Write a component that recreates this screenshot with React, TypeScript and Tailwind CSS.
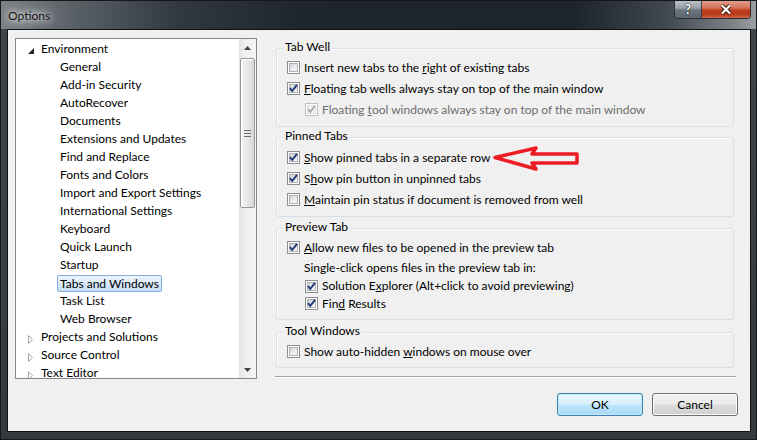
// Options 대화상자 (VS 2012, Win7 Aero) — Tabs and Windows 페이지
import type { ReactNode } from "react"

// ─── 트리 항목 ────────────────────────────────────────────────────────────────
const ENV_ITEMS = [
  "General",
  "Add-in Security",
  "AutoRecover",
  "Documents",
  "Extensions and Updates",
  "Find and Replace",
  "Fonts and Colors",
  "Import and Export Settings",
  "International Settings",
  "Keyboard",
  "Quick Launch",
  "Startup",
  "Tabs and Windows",
  "Task List",
  "Web Browser",
]
const ROOTS = ["Projects and Solutions", "Source Control", "Text Editor"]
const SELECTED = "Tabs and Windows"

// ─── 체크박스 (Win7 스타일) ───────────────────────────────────────────────────
function Check({ checked = false, disabled = false }: { checked?: boolean; disabled?: boolean }) {
  return (
    <span
      className={`relative w-[13px] h-[13px] shrink-0 border p-px bg-white ${
        disabled ? "border-[#c0c0c0]" : "border-[#8e8f8f]"
      }`}
    >
      <span
        className={`block w-full h-full border ${
          disabled
            ? "border-[#e2e2e2] bg-[#f4f4f4]"
            : "border-[#aeb2b7] bg-[linear-gradient(135deg,#cfd2d6_0%,#e9ebed_55%,#f8f8f8_100%)]"
        }`}
      />
      {checked && (
        <svg className="absolute left-0 top-0" width="11" height="11" viewBox="1 1 11 11">
          <path
            d="M3 6 L5.2 9 L10 2.8"
            fill="none"
            stroke={disabled ? "#a9a9b2" : "#21397a"}
            strokeWidth="2"
            strokeLinejoin="round"
          />
        </svg>
      )}
    </span>
  )
}

// ─── 그룹 박스 ────────────────────────────────────────────────────────────────
function Group({ title, className, children }: { title: string; className: string; children: ReactNode }) {
  return (
    <div
      className={`ml-px w-[458px] border border-[#d5dfe5] rounded-[3px] shadow-[inset_1px_1px_0_#fff] ${className}`}
    >
      <div className="-mt-[10px] ml-[6px] w-fit h-[16px] px-[2px] leading-[16px] bg-[#f0f0f0]">{title}</div>
      {children}
    </div>
  )
}

function Opt({
  h = 21,
  nested = false,
  checked,
  disabled,
  children,
}: {
  h?: number
  nested?: boolean
  checked?: boolean
  disabled?: boolean
  children: ReactNode
}) {
  return (
    <div
      className={`flex items-center ${nested ? "pl-[28px]" : "pl-[10px]"} ${
        disabled ? "text-[#6d6d6d]" : ""
      }`}
      style={{ height: h }}
    >
      <Check checked={checked} disabled={disabled} />
      <span className="ml-[4px] whitespace-nowrap">{children}</span>
    </div>
  )
}

// ─── 스크롤바 ────────────────────────────────────────────────────────────────
function ScrollBar() {
  return (
    <div className="w-[17px] h-full flex flex-col bg-[linear-gradient(90deg,#e4e4e4_0%,#efefef_35%,#f6f6f6_100%)]">
      <div className="h-[17px] flex items-center justify-center">
        <svg width="7" height="4" viewBox="0 0 7 4">
          <polygon points="0,4 3.5,0 7,4" fill="#404040" />
        </svg>
      </div>
      <div className="mt-[2px] mx-px h-[150px] rounded-[2px] border border-[#979797] bg-[linear-gradient(90deg,#f5f5f5_0%,#e9e9e9_45%,#d8d8d8_100%)] shadow-[inset_1px_1px_0_#fff] flex items-center justify-center">
        <svg width="7" height="7" viewBox="0 0 7 7">
          <path d="M0 0.5h7M0 3.5h7M0 6.5h7" stroke="#6f6f6f" strokeWidth="1" />
        </svg>
      </div>
      <div className="flex-1" />
      <div className="h-[17px] flex items-center justify-center">
        <svg width="7" height="4" viewBox="0 0 7 4">
          <polygon points="0,0 3.5,4 7,0" fill="#404040" />
        </svg>
      </div>
    </div>
  )
}

// ─── 트리 ────────────────────────────────────────────────────────────────────
function Tree() {
  return (
    <div className="w-[242px] h-full border border-[#828790] bg-white flex overflow-hidden">
      <div className="flex-1 pt-px overflow-hidden">
        <div className="h-[18px] flex items-center pl-[12px]">
          <svg className="mt-[3px]" width="6" height="6" viewBox="0 0 6 6">
            <polygon points="6,0 6,6 0,6" fill="#262626" />
          </svg>
          <span className="ml-[7px]">Environment</span>
        </div>
        {ENV_ITEMS.map((it) =>
          it === SELECTED ? (
            <div key={it} className="h-[18px] flex items-center pl-[41px]">
              <span className="h-[17px] px-[2px] leading-[15px] whitespace-nowrap rounded-[2px] border border-[#84acdd] bg-[linear-gradient(180deg,#eef5fd_0%,#d9e8f9_50%,#c9def6_100%)]">
                {it}
              </span>
            </div>
          ) : (
            <div key={it} className="h-[18px] flex items-center pl-[44px] whitespace-nowrap">
              {it}
            </div>
          )
        )}
        {ROOTS.map((it) => (
          <div key={it} className="h-[18px] flex items-center pl-[12px] whitespace-nowrap">
            <svg className="mt-[4px]" width="5" height="9" viewBox="0 0 5 9">
              <polygon points="0.5,0.5 4.5,4.5 0.5,8.5" fill="#fff" stroke="#a6a6a6" />
            </svg>
            <span className="ml-[8px]">{it}</span>
          </div>
        ))}
      </div>
      <ScrollBar />
    </div>
  )
}

export default function App() {
  return (
    <div className="relative w-[757px] h-[440px] overflow-hidden border border-[#14181b] bg-[linear-gradient(180deg,#3f454b_0%,#33393e_100%)] font-['Lato',sans-serif] text-[12px] text-black">
      {/* ── 타이틀 바 ───────────────────────────────────────────────────── */}
      <div className="h-[28px] flex items-start bg-[linear-gradient(90deg,#7d8287_0%,#585f65_10%,#30373e_24%,#1e252c_40%,#1d242b_76%,#40474e_88%,#7e8388_97%,#9a9ea2_100%)]">
        <span className="mt-[6px] ml-[6px] px-[1px] text-[#161616] [text-shadow:0_0_6px_#fff,0_0_10px_rgba(255,255,255,0.7),0_0_14px_rgba(255,255,255,0.5)]">
          Options
        </span>
        <div className="ml-auto mr-[5px] -mt-px h-[19px] flex rounded-b-[4px] border border-t-0 border-[#2a2f34] overflow-hidden">
          <div className="w-[27px] h-full flex items-center justify-center border-r border-[#3a4046] bg-[linear-gradient(180deg,#c0c6cb_0%,#98a0a7_45%,#6d757c_55%,#5e666d_100%)] text-white font-bold text-[13px] leading-none [text-shadow:0_0_2px_#222,0_0_1px_#000]">
            ?
          </div>
          <div className="w-[48px] h-full flex items-center justify-center bg-[linear-gradient(180deg,#e5a493_0%,#d4715a_45%,#c0401f_55%,#b8391c_80%,#d06a45_100%)]">
            <svg width="12" height="11" viewBox="0 0 12 11">
              <path d="M2 1.5 L10 9.5 M10 1.5 L2 9.5" stroke="#3b1a12" strokeWidth="4" />
              <path d="M2 1.5 L10 9.5 M10 1.5 L2 9.5" stroke="#fff" strokeWidth="2.2" />
            </svg>
          </div>
        </div>
      </div>

      {/* ── 클라이언트 영역 ─────────────────────────────────────────────── */}
      <div className="ml-[6px] mr-[5px] h-[403px] border border-[#0f1215] bg-[#f0f0f0] pt-[8px] pl-[7px]">
        <div className="flex h-[341px]">
          <Tree />

          <div className="ml-[18px] w-[461px] flex flex-col">
            <Group title="Tab Well" className="mt-[10px] h-[79px]">
              <div className="mt-[2px]" />
              <Opt>
                Insert new tabs to the <u>r</u>ight of existing tabs
              </Opt>
              <Opt checked>
                <u>F</u>loating tab wells always stay on top of the main window
              </Opt>
              <Opt nested checked disabled>
                Floating <u>t</u>ool windows always stay on top of the main window
              </Opt>
            </Group>

            <Group title="Pinned Tabs" className="mt-[10px] h-[80px]">
              <div className="mt-[3px]" />
              <Opt checked>
                <u>S</u>how pinned tabs in a separate row
              </Opt>
              <Opt checked>
                S<u>h</u>ow pin button in unpinned tabs
              </Opt>
              <Opt>
                <u>M</u>aintain pin status if document is removed from well
              </Opt>
            </Group>

            <Group title="Preview Tab" className="mt-[11px] h-[92px]">
              <div className="mt-[2px]" />
              <Opt checked>
                <u>A</u>llow new files to be opened in the preview tab
              </Opt>
              <div className="h-[19px] flex items-center pl-[27px] whitespace-nowrap">
                Single-click opens files in the preview tab in:
              </div>
              <Opt nested checked h={18}>
                Solution E<u>x</u>plorer (Alt+click to avoid previewing)
              </Opt>
              <Opt nested checked h={17}>
                Fin<u>d</u> Results
              </Opt>
            </Group>

            <Group title="Tool Windows" className="mt-[12px] h-[36px]">
              <div className="mt-[2px]" />
              <Opt>
                Show auto-hidden <u>w</u>indows on mouse over
              </Opt>
            </Group>

            <div className="mt-[8px] h-px bg-[#a0a0a0]" />
            <div className="h-px bg-white" />
          </div>
        </div>

        {/* ── 버튼 ─────────────────────────────────────────────────────── */}
        <div className="mt-[14px] pr-[12px] flex justify-end gap-[9px]">
          <button className="w-[86px] h-[23px] rounded-[3px] border border-[#3c7fb1] bg-[linear-gradient(180deg,#eaf6fd_0%,#d9f0fc_48%,#bee6fd_52%,#a7d9f5_100%)] shadow-[inset_0_0_0_1px_#c4eafc] text-black">
            OK
          </button>
          <button className="w-[86px] h-[23px] rounded-[3px] border border-[#707070] bg-[linear-gradient(180deg,#f2f2f2_0%,#ebebeb_48%,#dddddd_52%,#cfcfcf_100%)] shadow-[inset_0_0_0_1px_#fbfbfb] text-black">
            Cancel
          </button>
        </div>
      </div>

      {/* ── 빨간 화살표 (스크린샷 주석) ─────────────────────────────────── */}
      <svg className="absolute left-[486px] top-[141px]" width="96" height="32" viewBox="0 0 96 32">
        <polygon
          points="8,15.5 49,6 45,12 90,12 90,21 45,21 49,27"
          fill="none"
          stroke="#ed1c24"
          strokeWidth="3.5"
          strokeLinejoin="round"
        />
      </svg>
    </div>
  )
}
